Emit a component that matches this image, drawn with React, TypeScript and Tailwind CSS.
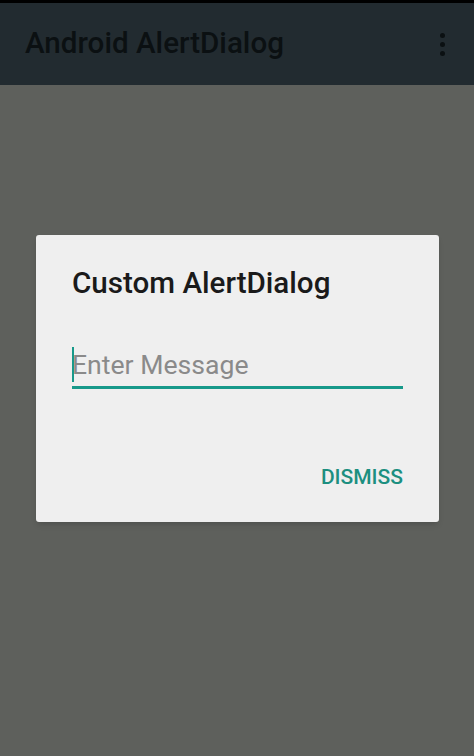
export default function App() {
  return (
    <div className="flex h-[756px] w-[474px] flex-col bg-[#5e605c]" style={{ fontFamily: "Roboto, 'Noto Sans', sans-serif" }}>
      {/* status bar */}
      <div className="h-[3px] bg-black" />
      {/* toolbar */}
      <div className="flex h-[82px] items-center justify-between bg-[#222b30] pl-[25px] pr-[29px]">
        <span className="text-[29.6px] font-medium leading-none text-[#0b1012]">Android AlertDialog</span>
        <div className="flex flex-col gap-[4px]">
          <span className="h-[5px] w-[5px] rounded-full bg-[#0b1012]" />
          <span className="h-[5px] w-[5px] rounded-full bg-[#0b1012]" />
          <span className="h-[5px] w-[5px] rounded-full bg-[#0b1012]" />
        </div>
      </div>

      {/* dialog */}
      <div className="mx-[36px] mt-[150px] h-[287px] w-[403px] rounded-[3px] bg-[#efefef] px-[36px] pt-[32px] shadow-md">
        <div className="text-[29.6px] font-medium leading-[32px] text-[#1a1a1a]">Custom AlertDialog</div>
        <div className="relative mt-[50px] border-b-[3px] border-[#17998a] pb-[5px]">
          <span className="absolute left-0 top-[-2px] h-[35px] w-[2px] bg-[#17998a]" />
          <span className="block text-[26.6px] leading-[32px] text-[#8a8a8a]">Enter Message</span>
        </div>
        <div className="mt-[76px] flex justify-end">
          <span className="text-[21px] font-medium leading-[24px] text-[#1c8f80]">DISMISS</span>
        </div>
      </div>
    </div>
  );
}
